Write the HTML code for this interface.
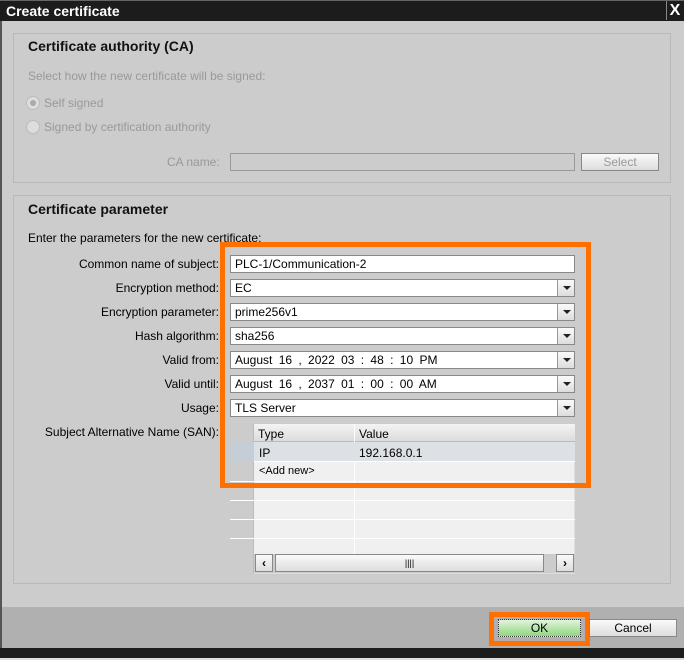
<!DOCTYPE html>
<html><head><style>
*{margin:0;padding:0;box-sizing:border-box}
body{width:684px;height:660px;background:#ccc;font-family:"Liberation Sans",sans-serif;font-size:12px;color:#000;position:relative;overflow:hidden}
.a{position:absolute}
.title{left:0;top:0;width:684px;height:21px;background:#1c1c1c;color:#fff;font-size:14px;font-weight:bold;padding:2px 6px;border-top:1px solid #666}
.x{right:1px;top:1px;width:17px;height:19px;border-left:1px solid #888;color:#fff;font-size:16px;font-weight:bold;text-align:center;line-height:19px}
.panel{border:1px solid #b8b8b8;left:13px;width:658px}
.h{font-size:14px;font-weight:bold;color:#111}
.gray{color:#999}
.lbl{right:465px;text-align:right;white-space:nowrap}
.f{left:230px;width:345px;height:18px;background:#fff;border:1px solid #888;padding:1px 4px;line-height:14px}
.dd{position:absolute;right:0;top:0;width:17px;height:16px;border-left:1px solid #999;background:linear-gradient(#fafafa,#ddd)}
.dd:after{content:"";position:absolute;left:5px;top:6px;border:4px solid transparent;border-top:4px solid #222;border-bottom:none}
.btn{height:18px;border:1px solid #888;text-align:center;line-height:16px;background:linear-gradient(#fafafa,#ddd)}
</style></head><body>
<div class="a title">Create certificate</div>
<div class="a x">X</div>
<div class="a" style="left:0;top:21px;width:2px;height:627px;background:#555"></div>

<div class="a panel" style="top:33px;height:150px"></div>
<div class="a h" style="left:28px;top:38px">Certificate authority (CA)</div>
<div class="a gray" style="left:28px;top:69px">Select how the new certificate will be signed:</div>
<div class="a" style="left:26px;top:96px;width:14px;height:14px;border-radius:50%;background:#ddd;border:1px solid #bbb"><div style="margin:3px;width:6px;height:6px;border-radius:50%;background:#aaa"></div></div>
<div class="a gray" style="left:44px;top:96px">Self signed</div>
<div class="a" style="left:26px;top:120px;width:14px;height:14px;border-radius:50%;background:#ddd;border:1px solid #bbb"></div>
<div class="a gray" style="left:44px;top:120px">Signed by certification authority</div>
<div class="a gray" style="left:167px;top:155px">CA name:</div>
<div class="a" style="left:230px;top:153px;width:345px;height:18px;border:1px solid #999;background:#ccc"></div>
<div class="a btn gray" style="left:581px;top:153px;width:78px">Select</div>

<div class="a panel" style="top:195px;height:389px"></div>
<div class="a h" style="left:28px;top:201px">Certificate parameter</div>
<div class="a" style="left:28px;top:231px">Enter the parameters for the new certificate:</div>

<div class="a lbl" style="top:257px">Common name of subject:</div>
<div class="a lbl" style="top:281px">Encryption method:</div>
<div class="a lbl" style="top:305px">Encryption parameter:</div>
<div class="a lbl" style="top:329px">Hash algorithm:</div>
<div class="a lbl" style="top:353px">Valid from:</div>
<div class="a lbl" style="top:377px">Valid until:</div>
<div class="a lbl" style="top:401px">Usage:</div>
<div class="a lbl" style="top:425px">Subject Alternative Name (SAN):</div>

<div class="a f" style="top:255px">PLC-1/Communication-2</div>
<div class="a f" style="top:279px">EC<span class="dd"></span></div>
<div class="a f" style="top:303px">prime256v1<span class="dd"></span></div>
<div class="a f" style="top:327px">sha256<span class="dd"></span></div>
<div class="a f" style="top:351px;word-spacing:3px">August 16 , 2022 03 : 48 : 10 PM<span class="dd"></span></div>
<div class="a f" style="top:375px;word-spacing:3px">August 16 , 2037 01 : 00 : 00 AM<span class="dd"></span></div>
<div class="a f" style="top:399px">TLS Server<span class="dd"></span></div>

<div class="a" style="left:230px;top:424px;width:345px;height:150px;background:#f0f0f0;border:1px solid #ddd"></div>
<div class="a" style="left:230px;top:424px;width:24px;height:150px;background:#ccc;border-right:1px solid #bbb"></div>
<div class="a" style="left:254px;top:424px;width:321px;height:18px;background:linear-gradient(#f4f4f4,#dcdcdc);border-bottom:1px solid #bbb"></div>
<div class="a" style="left:354px;top:424px;width:1px;height:130px;background:#fff"></div>
<div class="a" style="left:258px;top:427px">Type</div>
<div class="a" style="left:359px;top:427px">Value</div>
<div class="a" style="left:230px;top:442px;width:345px;height:20px;background:#dde1e5;border-bottom:1px solid #fff"></div>
<div class="a" style="left:230px;top:442px;width:24px;height:20px;background:#c5ced6"></div>
<div class="a" style="left:259px;top:446px">IP</div>
<div class="a" style="left:359px;top:446px">192.168.0.1</div>
<div class="a" style="left:259px;top:465px;font-size:11px">&lt;Add new&gt;</div>
<div class="a" style="left:230px;top:481px;width:345px;height:1px;background:#fff"></div>
<div class="a" style="left:230px;top:500px;width:345px;height:1px;background:#fff"></div>
<div class="a" style="left:230px;top:519px;width:345px;height:1px;background:#fff"></div>
<div class="a" style="left:230px;top:538px;width:345px;height:1px;background:#fff"></div>
<div class="a" style="left:254px;top:554px;width:321px;height:19px;background:#ccc"></div>
<div class="a btn" style="left:255px;top:554px;width:18px;font-weight:bold">&lsaquo;</div>
<div class="a btn" style="left:275px;top:554px;width:269px;font-size:9px">||||</div>
<div class="a btn" style="left:556px;top:554px;width:18px;font-weight:bold">&rsaquo;</div>

<div class="a" style="left:220px;top:242px;width:371px;height:246px;border:5px solid #ff7000"></div>

<div class="a" style="left:2px;top:607px;width:682px;height:41px;background:#b0b0b0"></div>
<div class="a" style="left:489px;top:612px;width:101px;height:34px;border:5px solid #ff7000"></div>
<div class="a btn" style="left:498px;top:619px;width:83px;background:linear-gradient(#e2f5dc,#8fd67f);border:1px dotted #333">OK</div>
<div class="a btn" style="left:589px;top:619px;width:88px">Cancel</div>
<div class="a" style="left:0;top:648px;width:684px;height:12px;background:#1c1c1c"></div>
<div class="a" style="left:0;top:658px;width:684px;height:2px;background:#ddd"></div>
</body></html>
